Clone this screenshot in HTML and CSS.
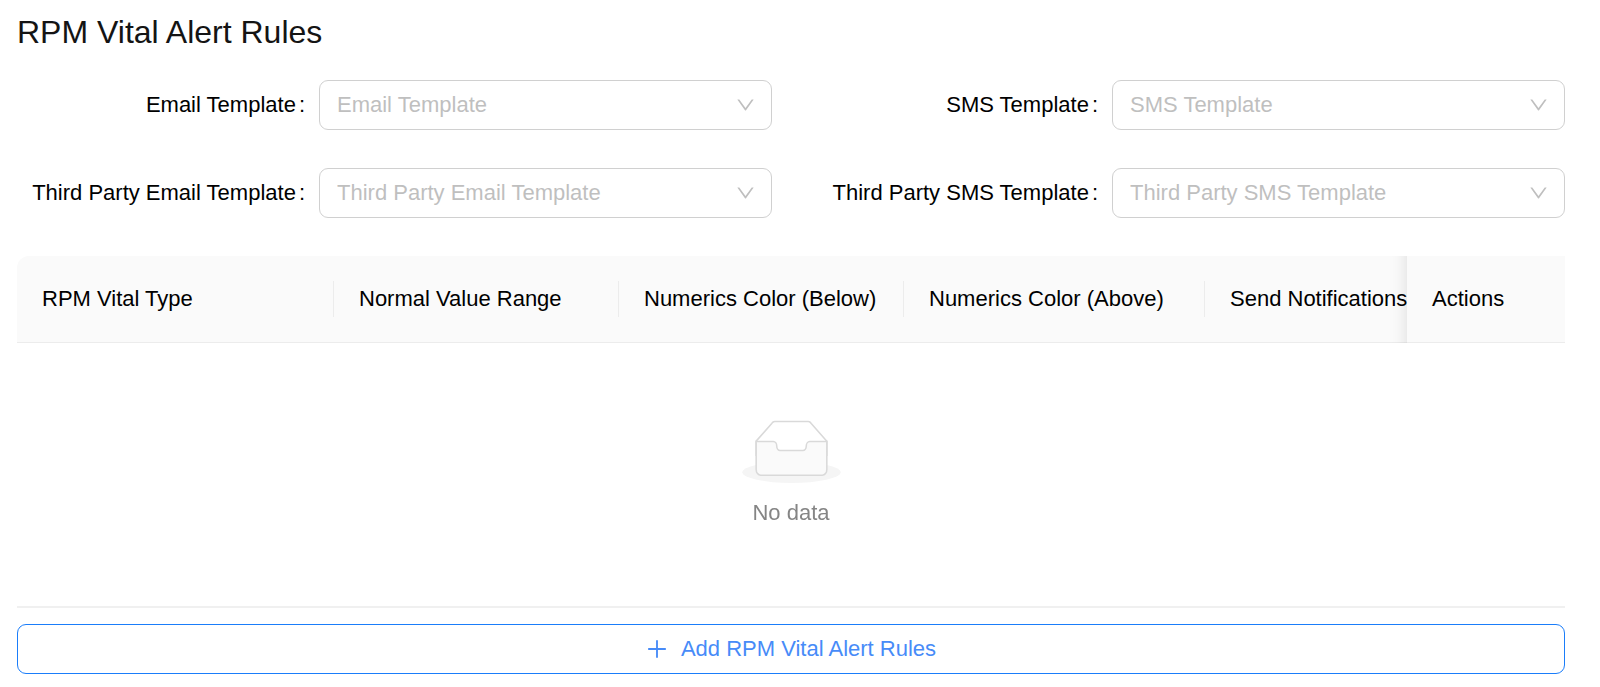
FILE: index.html
```html
<!DOCTYPE html>
<html lang="en">

<head>
    <meta charset="UTF-8">
    <meta name="viewport" content="width=device-width, initial-scale=1.0">
    <title>RPM Vital Alert Rules</title>
    <link rel="stylesheet" href="styles.css">
</head>

<body>
    <!-- Shared chevron for the drop-downs -->
    <svg class="sprite" aria-hidden="true">
        <symbol id="icon-down" viewBox="64 64 896 896">
            <path d="M884 256h-75c-5.1 0-9.9 2.5-12.9 6.6L512 654.2 227.9 262.6c-3-4.1-7.8-6.6-12.9-6.6h-75c-6.5 0-10.3 7.4-6.5 12.7l352.6 486.1c12.8 17.6 39 17.6 51.7 0l352.6-486.1c3.9-5.3.1-12.7-6.4-12.7z"/>
        </symbol>
    </svg>

    <main class="page">
        <h1>RPM Vital Alert Rules</h1>

        <!-- Templates -->
        <form class="template-form">
            <div class="form-item">
                <label for="email-template">Email Template</label>
                <div class="select">
                    <select id="email-template" name="email-template">
                        <option value="">Email Template</option>
                    </select>
                    <svg class="arrow" aria-hidden="true"><use href="#icon-down"/></svg>
                </div>
            </div>
            <div class="form-item">
                <label for="sms-template">SMS Template</label>
                <div class="select">
                    <select id="sms-template" name="sms-template">
                        <option value="">SMS Template</option>
                    </select>
                    <svg class="arrow" aria-hidden="true"><use href="#icon-down"/></svg>
                </div>
            </div>
            <div class="form-item">
                <label for="third-party-email">Third Party Email Template</label>
                <div class="select">
                    <select id="third-party-email" name="third-party-email">
                        <option value="">Third Party Email Template</option>
                    </select>
                    <svg class="arrow" aria-hidden="true"><use href="#icon-down"/></svg>
                </div>
            </div>
            <div class="form-item">
                <label for="third-party-sms">Third Party SMS Template</label>
                <div class="select">
                    <select id="third-party-sms" name="third-party-sms">
                        <option value="">Third Party SMS Template</option>
                    </select>
                    <svg class="arrow" aria-hidden="true"><use href="#icon-down"/></svg>
                </div>
            </div>
        </form>

        <!-- Rules table, scrolls sideways under the Actions column -->
        <div class="table-scroll">
            <table class="rules-table">
                <colgroup>
                    <col class="col-type">
                    <col class="col-value">
                    <col class="col-value">
                    <col class="col-above">
                    <col class="col-notify">
                    <col class="col-actions">
                </colgroup>
                <thead>
                    <tr>
                        <th>RPM Vital Type</th>
                        <th>Normal Value Range</th>
                        <th>Numerics Color (Below)</th>
                        <th>Numerics Color (Above)</th>
                        <th>Send Notifications</th>
                        <th class="fixed-right">Actions</th>
                    </tr>
                </thead>
                <tbody>
                    <tr>
                        <td colspan="6">
                            <div class="empty">
                                <svg class="empty-image" viewBox="0 0 64 41" aria-hidden="true">
                                    <g transform="translate(0 1)" fill="none" fill-rule="evenodd">
                                        <ellipse fill="#f5f5f5" cx="32" cy="33" rx="32" ry="7"/>
                                        <g fill-rule="nonzero" stroke="#d9d9d9">
                                            <path d="M55 12.76L44.854 1.258C44.367.474 43.656 0 42.907 0H21.093c-.749 0-1.46.474-1.947 1.257L9 12.761V22h46v-9.24z"/>
                                            <path d="M41.613 15.931c0-1.605.994-2.93 2.227-2.931H55v18.137C55 33.26 53.68 35 52.05 35h-40.1C10.32 35 9 33.259 9 31.137V13h11.16c1.233 0 2.227 1.323 2.227 2.928v.022c0 1.605 1.005 2.901 2.237 2.901h14.752c1.232 0 2.237-1.308 2.237-2.913v-.007z" fill="#fafafa"/>
                                        </g>
                                    </g>
                                </svg>
                                <p>No data</p>
                            </div>
                        </td>
                    </tr>
                </tbody>
            </table>
        </div>

        <button type="button" class="add-rule-btn">
            <svg viewBox="64 64 896 896" aria-hidden="true">
                <path d="M482 152h60q8 0 8 8v704q0 8-8 8h-60q-8 0-8-8V160q0-8 8-8z"/>
                <path d="M160 474h704q8 0 8 8v60q0 8-8 8H160q-8 0-8-8v-60q0-8 8-8z"/>
            </svg>
            <span>Add RPM Vital Alert Rules</span>
        </button>
    </main>
</body>

</html>
```

FILE: styles.css
```css
* {
    box-sizing: border-box;
}

body {
    margin: 0;
    font-family: "Liberation Sans", Arial, sans-serif;
    font-size: 22px;
    line-height: 36px;
    color: #000;
    background-color: #fff;
}

.sprite {
    display: none;
}

.page {
    padding: 8px 35px 12px 17px;
}

h1 {
    margin: 0 0 24px;
    font-size: 32px;
    font-weight: normal;
    line-height: 48px;
    color: #141414;
}

/* Form */
.template-form {
    display: grid;
    grid-template-columns: 1fr 1fr;
    gap: 38px;
    margin-bottom: 38px;
}

.form-item {
    display: grid;
    grid-template-columns: 40% 1fr;
    align-items: center;
}

.form-item label {
    text-align: right;
    white-space: nowrap;
}

.form-item label::after {
    content: ":";
    margin: 0 14px 0 3px;
}

.select {
    position: relative;
}

.select select {
    display: block;
    width: 100%;
    height: 50px;
    padding: 0 48px 0 17px;
    border: 1px solid #d0d0d0;
    border-radius: 9px;
    appearance: none;
    background-color: #fff;
    color: #bfbfbf;
    font: inherit;
}

.arrow {
    position: absolute;
    top: 50%;
    right: 17px;
    width: 19px;
    height: 19px;
    transform: translateY(-50%);
    fill: #bfbfbf;
    pointer-events: none;
}

/* Table */
.table-scroll {
    container-type: inline-size;
    overflow-x: auto;
    scrollbar-width: none;
    border-top-left-radius: 12px;
    margin-bottom: 16px;
}

.rules-table {
    width: 100%;
    min-width: 1600px;
    table-layout: fixed;
    border-collapse: separate;
    border-spacing: 0;
}

.col-type {
    width: 317px;
}

.col-value {
    width: 285px;
}

.col-above {
    width: 301px;
}

.col-actions {
    width: 158px;
}

.rules-table th {
    position: relative;
    padding: 25px;
    background-color: #fafafa;
    border-bottom: 1px solid #ececec;
    font-weight: normal;
    text-align: left;
    white-space: nowrap;
}

.rules-table th:nth-child(-n+4)::before {
    content: "";
    position: absolute;
    top: 25px;
    right: 0;
    width: 1px;
    height: 36px;
    background-color: #ececec;
}

.rules-table .fixed-right {
    position: sticky;
    right: 0;
    z-index: 1;
}

.fixed-right::after {
    content: "";
    position: absolute;
    top: 0;
    bottom: -1px;
    left: -47px;
    width: 47px;
    box-shadow: inset -16px 0 13px -13px rgba(5, 5, 5, 0.09);
    pointer-events: none;
}

.rules-table td {
    padding: 0;
    border-bottom: 2px solid #f0f0f0;
}

/* stays centred in the visible part of the table */
.empty {
    position: sticky;
    left: 0;
    width: 100cqw;
    padding: 77px 0 75px;
    text-align: center;
    color: #858585;
}

.empty-image {
    display: block;
    width: 101px;
    height: 63px;
    margin: 0 auto 12px;
}

.empty p {
    margin: 0;
}

/* Add button */
.add-rule-btn {
    display: flex;
    align-items: center;
    justify-content: center;
    gap: 13px;
    width: 100%;
    height: 50px;
    border: 1px solid #1a7dfa;
    border-radius: 9px;
    background-color: #fff;
    color: #478bf8;
    font: inherit;
    cursor: pointer;
}

.add-rule-btn svg {
    width: 22px;
    height: 22px;
    fill: #478bf8;
}
```
